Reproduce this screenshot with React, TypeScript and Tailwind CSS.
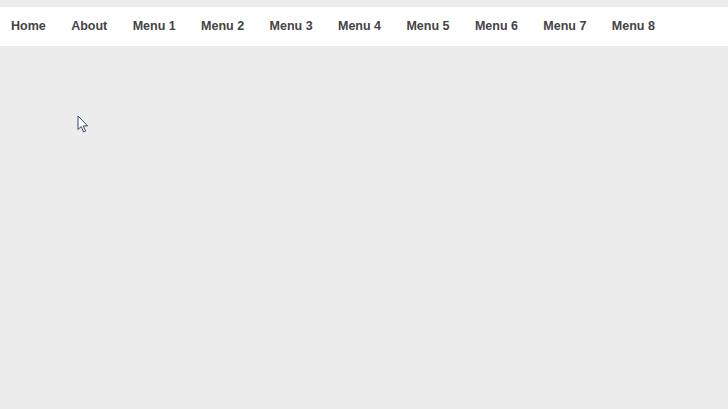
import React from 'react'

const items = ['Home', 'About', 'Menu 1', 'Menu 2', 'Menu 3', 'Menu 4', 'Menu 5', 'Menu 6', 'Menu 7', 'Menu 8']

export default function App() {
  return (
    <div className="relative h-[409px] w-full bg-[#ececec] pt-[7px] font-['Liberation_Sans',Arial,sans-serif]">
      <nav className="h-[39px] bg-white">
        <ul className="flex h-full items-center gap-[25.4px] pl-[11px]">
          {items.map((item) => (
            <li key={item} className="text-[12.5px] font-bold text-[#444] leading-none">
              {item}
            </li>
          ))}
        </ul>
      </nav>

      {/* mouse pointer */}
      <svg
        className="absolute left-[77px] top-[115px]"
        width="13"
        height="19"
        viewBox="0 0 13 19"
      >
        <path
          d="M1 1 L1 14.5 L4.2 11.6 L6.6 17 L8.6 16.1 L6.3 10.9 L10.6 10.9 Z"
          fill="white"
          stroke="#3b4a6b"
          strokeWidth="1"
          strokeLinejoin="round"
        />
      </svg>
    </div>
  )
}
